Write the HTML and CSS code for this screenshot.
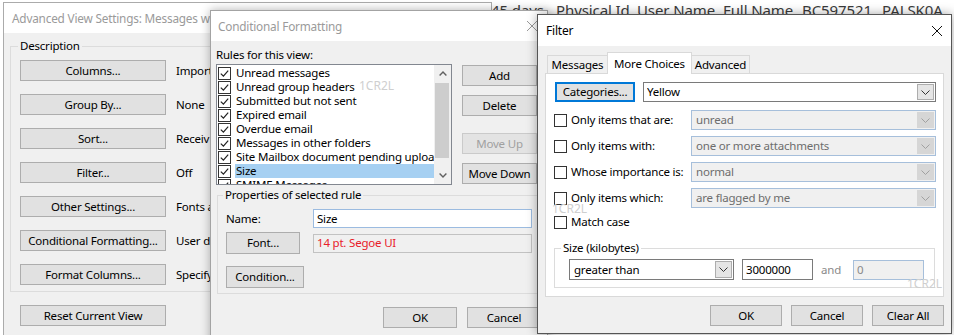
FILE: index.html
```html
<!DOCTYPE html>
<html lang="en">
<head>
<meta charset="utf-8">
<title>Outlook view dialogs</title>
<link rel="stylesheet" href="styles.css">
</head>
<body>
<div class="bg-headers">
  <span class="col c1">45 days</span><span class="col c2">Physical Id</span><span class="col c3">User Name</span><span class="col c4">Full Name</span><span class="col c5">BC597521</span><span class="col c6">PALSK0A</span>
</div>

<section class="win adv">
  <header class="titlebar inactive"><span class="title">Advanced View Settings: Messages wi</span></header>
  <div class="adv-body">
    <fieldset class="group desc">
      <legend>Description</legend>
      <div class="desc-rows">
        <div class="desc-row"><button class="btn desc-btn">Columns...</button><span class="desc-val">Import</span></div>
        <div class="desc-row"><button class="btn desc-btn">Group By...</button><span class="desc-val">None</span></div>
        <div class="desc-row"><button class="btn desc-btn">Sort...</button><span class="desc-val">Receiv</span></div>
        <div class="desc-row"><button class="btn desc-btn">Filter...</button><span class="desc-val">Off</span></div>
        <div class="desc-row"><button class="btn desc-btn">Other Settings...</button><span class="desc-val">Fonts a</span></div>
        <div class="desc-row"><button class="btn desc-btn">Conditional Formatting...</button><span class="desc-val">User d</span></div>
        <div class="desc-row"><button class="btn desc-btn">Format Columns...</button><span class="desc-val">Specify</span></div>
      </div>
    </fieldset>
    <button class="btn desc-btn reset">Reset Current View</button>
  </div>
</section>

<section class="win cf">
  <header class="titlebar inactive">
    <span class="title">Conditional Formatting</span>
    <svg class="close" width="10" height="10" viewBox="0 0 10 10"><path d="M0 0L10 10M10 0L0 10" stroke="#9a9a9a" stroke-width="1"/></svg>
  </header>
  <div class="cf-body">
    <div class="rules-label">Rules for this view:</div>
    <div class="rules">
      <div class="listbox">
        <ul class="items">
          <li><span class="cb"><svg width="9" height="9" viewBox="0 0 9 9"><path d="M0.8 4.6L3.4 7.2L8.2 1.6" fill="none" stroke="#222" stroke-width="1.2"/></svg></span><span class="item-text">Unread messages</span></li>
          <li><span class="cb"><svg width="9" height="9" viewBox="0 0 9 9"><path d="M0.8 4.6L3.4 7.2L8.2 1.6" fill="none" stroke="#222" stroke-width="1.2"/></svg></span><span class="item-text">Unread group headers</span></li>
          <li><span class="cb"><svg width="9" height="9" viewBox="0 0 9 9"><path d="M0.8 4.6L3.4 7.2L8.2 1.6" fill="none" stroke="#222" stroke-width="1.2"/></svg></span><span class="item-text">Submitted but not sent</span></li>
          <li><span class="cb"><svg width="9" height="9" viewBox="0 0 9 9"><path d="M0.8 4.6L3.4 7.2L8.2 1.6" fill="none" stroke="#222" stroke-width="1.2"/></svg></span><span class="item-text">Expired email</span></li>
          <li><span class="cb"><svg width="9" height="9" viewBox="0 0 9 9"><path d="M0.8 4.6L3.4 7.2L8.2 1.6" fill="none" stroke="#222" stroke-width="1.2"/></svg></span><span class="item-text">Overdue email</span></li>
          <li><span class="cb"><svg width="9" height="9" viewBox="0 0 9 9"><path d="M0.8 4.6L3.4 7.2L8.2 1.6" fill="none" stroke="#222" stroke-width="1.2"/></svg></span><span class="item-text">Messages in other folders</span></li>
          <li><span class="cb"><svg width="9" height="9" viewBox="0 0 9 9"><path d="M0.8 4.6L3.4 7.2L8.2 1.6" fill="none" stroke="#222" stroke-width="1.2"/></svg></span><span class="item-text">Site Mailbox document pending upload</span></li>
          <li><span class="cb"><svg width="9" height="9" viewBox="0 0 9 9"><path d="M0.8 4.6L3.4 7.2L8.2 1.6" fill="none" stroke="#222" stroke-width="1.2"/></svg></span><span class="item-text sel">Size</span></li>
          <li><span class="cb"><svg width="9" height="9" viewBox="0 0 9 9"><path d="M0.8 4.6L3.4 7.2L8.2 1.6" fill="none" stroke="#222" stroke-width="1.2"/></svg></span><span class="item-text">SMIME Messages</span></li>
        </ul>
        <div class="vscroll">
          <span class="sarrow"><svg width="8" height="5" viewBox="0 0 8 5"><path d="M0.6 4.4L4 1L7.4 4.4" fill="none" stroke="#606060" stroke-width="1.4"/></svg></span>
          <span class="strack"><span class="thumb"></span></span>
          <span class="sarrow"><svg width="8" height="5" viewBox="0 0 8 5"><path d="M0.6 0.6L4 4L7.4 0.6" fill="none" stroke="#606060" stroke-width="1.4"/></svg></span>
        </div>
      </div>
      <div class="rule-btns">
        <button class="btn">Add</button>
        <button class="btn">Delete</button>
        <button class="btn disabled move-up">Move Up</button>
        <button class="btn">Move Down</button>
      </div>
    </div>
    <fieldset class="group props">
      <legend>Properties of selected rule</legend>
      <div class="prop-row"><span class="prop-label">Name:</span><div class="textbox name-box">Size</div></div>
      <div class="prop-row font-row"><button class="btn font-btn">Font...</button><div class="textbox fontbox">14 pt. Segoe UI</div></div>
      <div class="prop-row cond-row"><button class="btn cond-btn">Condition...</button></div>
    </fieldset>
    <div class="dlg-btns"><button class="btn">OK</button><button class="btn">Cancel</button></div>
  </div>
</section>

<section class="win flt">
  <header class="titlebar active">
    <span class="title">Filter</span>
    <svg class="close" width="10" height="10" viewBox="0 0 10 10"><path d="M0 0L10 10M10 0L0 10" stroke="#111" stroke-width="1"/></svg>
  </header>
  <div class="flt-body">
    <div class="tabs">
      <span class="tab t-msg">Messages</span><span class="tab sel t-more">More Choices</span><span class="tab t-adv">Advanced</span>
    </div>
    <div class="tabpanel">
      <div class="cat-row">
        <button class="btn cat-btn default">Categories...</button>
        <div class="combo cat-combo"><span class="cv">Yellow</span><span class="arrow"><svg width="9" height="5" viewBox="0 0 9 5"><path d="M0.5 0.5L4.5 4.5L8.5 0.5" fill="none" stroke="#333"/></svg></span></div>
      </div>
      <div class="opt-row first">
        <span class="cb"></span><span class="opt-label">Only items that are:</span>
        <div class="combo dis"><span class="cv">unread</span><span class="arrow"><svg width="9" height="5" viewBox="0 0 9 5"><path d="M0.5 0.5L4.5 4.5L8.5 0.5" fill="none" stroke="#a0a0a0"/></svg></span></div>
      </div>
      <div class="opt-row">
        <span class="cb"></span><span class="opt-label">Only items with:</span>
        <div class="combo dis"><span class="cv">one or more attachments</span><span class="arrow"><svg width="9" height="5" viewBox="0 0 9 5"><path d="M0.5 0.5L4.5 4.5L8.5 0.5" fill="none" stroke="#a0a0a0"/></svg></span></div>
      </div>
      <div class="opt-row">
        <span class="cb"></span><span class="opt-label">Whose importance is:</span>
        <div class="combo dis"><span class="cv">normal</span><span class="arrow"><svg width="9" height="5" viewBox="0 0 9 5"><path d="M0.5 0.5L4.5 4.5L8.5 0.5" fill="none" stroke="#a0a0a0"/></svg></span></div>
      </div>
      <div class="opt-row">
        <span class="cb"></span><span class="opt-label">Only items which:</span>
        <div class="combo dis"><span class="cv">are flagged by me</span><span class="arrow"><svg width="9" height="5" viewBox="0 0 9 5"><path d="M0.5 0.5L4.5 4.5L8.5 0.5" fill="none" stroke="#a0a0a0"/></svg></span></div>
      </div>
      <div class="match-row"><span class="cb"></span><span class="match-label">Match case</span></div>
      <fieldset class="group size">
        <legend>Size (kilobytes)</legend>
        <div class="size-row">
          <div class="combo gt"><span class="cv">greater than</span><span class="arrow"><svg width="9" height="5" viewBox="0 0 9 5"><path d="M0.5 0.5L4.5 4.5L8.5 0.5" fill="none" stroke="#333"/></svg></span></div>
          <div class="textbox num">3000000</div>
          <span class="and">and</span>
          <div class="textbox num dis">0</div>
        </div>
      </fieldset>
    </div>
    <div class="dlg-btns"><button class="btn">OK</button><button class="btn">Cancel</button><button class="btn">Clear All</button></div>
  </div>
</section>

<span class="wm wm1">1CR2L</span>
<span class="wm wm2">1CR2L</span>
<span class="wm wm3">1CR2L</span>
</body>
</html>
```

FILE: styles.css
```css
* { box-sizing: border-box; }
html, body { margin: 0; padding: 0; }
body {
  width: 954px; height: 335px; overflow: hidden; position: relative;
  background: #fff;
  font-family: "Noto Sans", "Segoe UI", sans-serif;
  font-size: 11.5px; line-height: 16px; letter-spacing: -0.2px; color: #000;
}
button { font: inherit; letter-spacing: inherit; color: inherit; margin: 0; padding: 0; }
fieldset { margin: 0; min-width: 0; }
legend { padding: 0 2px; line-height: 16px; }
ul { margin: 0; padding: 0; list-style: none; }

/* background application column headers */
.bg-headers {
  position: absolute; left: 491px; top: 0;
  display: flex;
  font-size: 15px; line-height: 20px; letter-spacing: -0.1px;
  color: #3b3b3b; white-space: nowrap;
}
.col { flex: none; }
.c1 { width: 65px; }
.c2 { width: 81px; }
.c3 { width: 86px; }
.c4 { width: 79px; }
.c5 { width: 80px; }

/* windows */
.win { position: absolute; background: #f0f0f0; display: flex; flex-direction: column; }
.adv { left: 3px; top: 2px; width: 489px; height: 345px; border: 1px solid #ababab; }
.cf { left: 210px; top: 10px; width: 338px; height: 345px; border: 1px solid #a3a3a3; box-shadow: 0 0 9px rgba(0,0,0,.3); }
.flt { left: 537px; top: 14px; width: 415px; height: 320px; border: 1px solid #555; box-shadow: 0 0 10px rgba(0,0,0,.35); }

.titlebar {
  flex: none; height: 30px; background: #fff;
  display: flex; align-items: center; justify-content: space-between;
  white-space: nowrap; overflow: hidden;
}
.title { font-size: 12px; }
.titlebar.inactive .title { color: #9a9a9a; font-size: 11.8px; letter-spacing: -0.2px; }
.adv .titlebar { padding-left: 8px; justify-content: flex-start; }
.cf .titlebar { padding: 0 10px 0 7px; }
.flt .titlebar { height: 31px; padding: 0 9px 0 8px; }
.close { flex: none; }

/* buttons */
.btn {
  display: flex; align-items: center; justify-content: center;
  height: 21px; background: #e1e1e1; border: 1px solid #adadad; white-space: nowrap;
}
.btn.disabled { color: #a0a0a0; border-color: #cacaca; background: #e3e3e3; }
.btn.default { border: 1px solid #0078d7; box-shadow: inset 0 0 0 1px #0078d7; }

.group { border: 1px solid #dcdcdc; }

/* advanced view settings */
.adv-body { padding-left: 6px; }
.desc { margin-top: 5px; width: 472px; padding: 6px 0 6px 9px; }
.desc legend { margin-left: -2px; }
.desc-rows { display: flex; flex-direction: column; gap: 13px; }
.desc-row { display: flex; align-items: center; }
.desc-btn { width: 146px; flex: none; }
.desc-val { margin-left: 10px; white-space: nowrap; }
.reset { margin: 13px 0 0 10px; }

/* conditional formatting */
.cf-body { padding: 6px 6px 0 5px; }
.rules { display: flex; align-items: flex-start; margin-top: 1px; }
.listbox { width: 236px; height: 121px; border: 1px solid #828790; background: #fff; display: flex; flex: none; }
.items { flex: 1; min-width: 0; padding-top: 1px; overflow: hidden; }
.items li { height: 14px; display: flex; align-items: center; white-space: nowrap; }
.cb {
  flex: none; width: 13px; height: 13px; border: 1px solid #333; background: #fff;
  display: flex; align-items: center; justify-content: center;
}
.items .cb { margin-left: 1px; }
.item-text { flex: 1; margin-left: 4px; padding-left: 1px; line-height: 14px; overflow: hidden; }
.item-text.sel { background: #a6d0f2; }
.vscroll { width: 17px; flex: none; display: flex; flex-direction: column; background: #f0f0f0; }
.sarrow { height: 17px; display: flex; align-items: center; justify-content: center; flex: none; }
.strack { flex: 1; padding: 1px 2px 0 1px; }
.thumb { display: block; height: 75px; background: #cdcdcd; }
.rule-btns { margin: 1px 0 0 10px; display: flex; flex-direction: column; }
.rule-btns .btn { width: 75px; }
.rule-btns .btn + .btn { margin-top: 9px; }
.rule-btns .btn.move-up { margin-top: 17px; }

.props { margin: 2px 0 0 1px; width: 325px; padding: 6px 0 5px 8px; }
.props legend { margin-left: -3px; }
.prop-row { display: flex; align-items: center; }
.prop-label { width: 87px; }
.textbox {
  height: 19px; border: 1px solid #7a7a7a; background: #fff;
  padding: 0 3px; display: flex; align-items: center; white-space: nowrap;
}
.name-box { width: 219px; border-color: #9bbbe0; }
.font-row { margin-top: 4px; }
.font-btn { width: 74px; height: 22px; }
.fontbox { margin-left: 13px; width: 219px; background: #f0f0f0; border-color: #c2c2c2; color: #e8202a; }
.cond-row { margin-top: 12px; }
.cond-btn { width: 78px; height: 22px; }

.dlg-btns { display: flex; justify-content: flex-end; gap: 10px; margin-top: 13px; }
.dlg-btns .btn { width: 74px; }

/* filter */
.flt-body { padding: 0 7px; }
.tabs {
  display: flex; align-items: flex-end; height: 22px;
  margin: 6px 0 -1px 2px; position: relative; z-index: 1;
}
.tab {
  height: 18px; margin-bottom: 1px; border: 1px solid #d9d9d9; border-bottom: none;
  background: #f0f0f0; display: flex; align-items: center; justify-content: center; white-space: nowrap;
}
.tab.sel { height: 22px; margin-bottom: 0; background: #fff; }
.t-msg { width: 60px; border-right: none; }
.t-more { width: 85px; }
.t-adv { width: 58px; border-left: none; }
.tabpanel { height: 224px; background: #fff; border: 1px solid #d9d9d9; padding: 8px 7px 0 8px; }

.cat-row { display: flex; align-items: center; }
.cat-btn { width: 80px; height: 20px; margin-left: 1px; }
.combo {
  display: flex; align-items: center; height: 20px;
  border: 1px solid #7a7a7a; background: #fff; padding-left: 3px;
}
.combo .cv { flex: 1; min-width: 0; white-space: nowrap; overflow: hidden; }
.combo .arrow {
  flex: none; width: 17px; height: 16px; margin-right: 1px;
  border: 1px solid #adadad; background: #e5e5e5;
  display: flex; align-items: center; justify-content: center;
}
.cat-combo { margin-left: 8px; width: 293px; }

.opt-row { display: flex; align-items: center; height: 20px; margin-top: 6px; }
.opt-row.first { margin-top: 8px; }
.opt-label { width: 120px; margin-left: 4px; white-space: nowrap; }
.combo.dis { width: 245px; background: #f0f0f0; border-color: #a6bfdb; color: #6d6d6d; padding-left: 4px; }
.combo.dis .arrow { background: #d6d6d6; border-color: #d6d6d6; }

.match-row { display: flex; align-items: center; height: 16px; margin-top: 6px; }
.match-label { margin-left: 4px; }

.size { margin-top: 10px; width: 381px; padding: 3px 0 7px 14px; }
.size legend { margin-left: -8px; }
.size-row { display: flex; align-items: center; }
.combo.gt { width: 165px; height: 21px; padding-left: 4px; }
.combo.gt .arrow { height: 17px; }
.num { width: 71px; height: 21px; margin-left: 8px; }
.and { width: 32px; margin-left: 8px; color: #8a8a8a; }
.num.dis { margin-left: 0; height: 20px; background: #f0f0f0; border-color: #a6bfdb; color: #8a8a8a; }

.flt .dlg-btns { gap: 9px; margin-top: 8px; }
.flt .dlg-btns .btn { width: 72px; }

/* watermarks */
.wm { position: absolute; z-index: 5; color: #cfcfcf; font-size: 12px; line-height: 14px; letter-spacing: 0; }
.wm1 { left: 359px; top: 79px; }
.wm2 { left: 552px; top: 202px; }
.wm3 { left: 907px; top: 277px; }
```
